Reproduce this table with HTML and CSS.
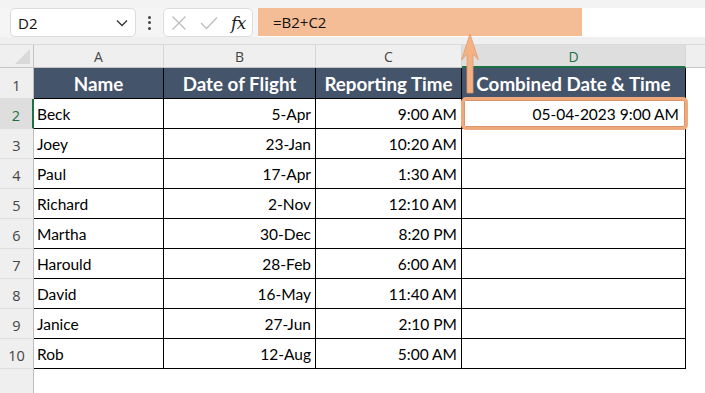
FILE: index.html
```html
<!DOCTYPE html>
<html>
<head>
<meta charset="utf-8">
<link rel="stylesheet" href="styles.css">
</head>
<body>
<div class="app">
  <div class="topband"></div>
  <div class="formula-row">
    <div class="namebox">
      <span class="ref">D2</span>
      <svg class="chev" width="12" height="8" viewBox="0 0 12 8"><path d="M1 1.5 L6 6.5 L11 1.5" fill="none" stroke="#333" stroke-width="1.3"/></svg>
    </div>
    <div class="dots"><span></span><span></span><span></span></div>
    <div class="fxbox">
      <svg width="16" height="16" viewBox="0 0 16 16"><path d="M1.5 1.5 L14.5 14.5 M14.5 1.5 L1.5 14.5" stroke="#bdbdbd" stroke-width="1.3"/></svg>
      <svg width="18" height="14" viewBox="0 0 18 14"><path d="M1 7 L6.5 12.5 L17 1.5" fill="none" stroke="#bdbdbd" stroke-width="1.3"/></svg>
      <span class="fx">fx</span>
    </div>
    <div class="input"><div class="hl">=B2+C2</div></div>
  </div>
  <div class="gapband"></div>
  <div class="sheet">
    <div class="ch corner"><span class="tri"></span></div>
    <div class="ch">A</div>
    <div class="ch">B</div>
    <div class="ch">C</div>
    <div class="ch sel">D</div>
    <div class="ch last"></div>

    <div class="rh r1">1</div>
    <div class="hd">Name</div>
    <div class="hd">Date of Flight</div>
    <div class="hd">Reporting Time</div>
    <div class="hd">Combined Date &amp; Time</div>
    <div class="ex r1"></div>

    <div class="rh sel">2</div>
    <div class="c l">Beck</div>
    <div class="c">5-Apr</div>
    <div class="c">9:00 AM</div>
    <div class="c active">05-04-2023 9:00 AM<span class="ring"></span></div>
    <div class="ex"></div>

    <div class="rh">3</div>
    <div class="c l">Joey</div>
    <div class="c">23-Jan</div>
    <div class="c">10:20 AM</div>
    <div class="c"></div>
    <div class="ex"></div>

    <div class="rh">4</div>
    <div class="c l">Paul</div>
    <div class="c">17-Apr</div>
    <div class="c">1:30 AM</div>
    <div class="c"></div>
    <div class="ex"></div>

    <div class="rh">5</div>
    <div class="c l">Richard</div>
    <div class="c">2-Nov</div>
    <div class="c">12:10 AM</div>
    <div class="c"></div>
    <div class="ex"></div>

    <div class="rh">6</div>
    <div class="c l">Martha</div>
    <div class="c">30-Dec</div>
    <div class="c">8:20 PM</div>
    <div class="c"></div>
    <div class="ex"></div>

    <div class="rh">7</div>
    <div class="c l">Harould</div>
    <div class="c">28-Feb</div>
    <div class="c">6:00 AM</div>
    <div class="c"></div>
    <div class="ex"></div>

    <div class="rh">8</div>
    <div class="c l">David</div>
    <div class="c">16-May</div>
    <div class="c">11:40 AM</div>
    <div class="c"></div>
    <div class="ex"></div>

    <div class="rh">9</div>
    <div class="c l">Janice</div>
    <div class="c">27-Jun</div>
    <div class="c">2:10 PM</div>
    <div class="c"></div>
    <div class="ex"></div>

    <div class="rh">10</div>
    <div class="c l">Rob</div>
    <div class="c">12-Aug</div>
    <div class="c">5:00 AM</div>
    <div class="c"></div>
    <div class="ex"></div>

    <div class="rh empty"></div>
    <div class="blank"></div>
  </div>
  <svg class="arrow" width="28" height="66" viewBox="0 0 28 66"><path d="M14 3 L22.5 29 L17 23 L17 62 L11 62 L11 23 L5.5 29 Z" fill="#f4b183" stroke="#e29a69" stroke-width="0.8" stroke-linejoin="round"/></svg>
</div>
</body>
</html>
```

FILE: styles.css
```css
* { box-sizing: border-box; }
html, body { margin: 0; padding: 0; background: #fff; }
.app { position: relative; width: 705px; height: 393px; overflow: hidden; font-family: "Open Sans", "Noto Sans", sans-serif; }

.topband { height: 8px; background: #f3f3f3; }
.formula-row { height: 29px; background: #f5f5f5; display: flex; align-items: stretch; padding-left: 10px; }
.namebox { width: 126px; background: #fff; border: 1px solid #dcdcdc; border-radius: 5px; display: flex; align-items: center; justify-content: space-between; padding: 0 7px 0 7px; }
.ref { font-size: 15px; color: #111; }
.dots { width: 27px; display: flex; flex-direction: column; align-items: center; justify-content: center; gap: 2.5px; }
.dots span { width: 3px; height: 3px; background: #444; border-radius: 50%; }
.fxbox { width: 90px; background: #fff; border: 1px solid #dcdcdc; border-radius: 5px; display: flex; align-items: center; padding-left: 7px; gap: 0; }
.fxbox svg:first-child { margin-right: 13px; }
.fxbox svg:nth-child(2) { margin-right: 13px; }
.fx { font-family: "DejaVu Serif", "Liberation Serif", serif; font-style: italic; font-size: 17px; color: #222; letter-spacing: -0.5px; }
.input { flex: 1; margin-left: 5px; background: #fff; display: flex; }
.hl { width: 324px; height: 28px; background: #f4bd96; font-size: 15px; color: #111; padding-left: 15px; display: flex; align-items: center; }

.gapband { height: 8px; background: #efefef; border-bottom: 1px solid #dadada; }

.sheet { display: grid; grid-template-columns: 34px 130px 152px 146px 224px 1fr; grid-template-rows: 23px 31px repeat(9, 30px) 1fr; height: 348px; font-family: Lato, "Liberation Sans", sans-serif; font-size: 15.5px; }

.ch { background: #efefef; border-right: 1px solid #d6d6d6; border-bottom: 1px solid #c4c4c4; display: flex; align-items: center; justify-content: center; font-family: "Open Sans", "Noto Sans", sans-serif; font-size: 14px; color: #444; padding-top: 1px; }
.ch.corner { position: relative; border-right: 1px solid #c4c4c4; }
.ch.corner .tri { position: absolute; right: 3px; bottom: 3px; width: 0; height: 0; border-left: 15px solid transparent; border-bottom: 15px solid #d9d9d9; }
.ch.sel { background: #dedede; color: #1e7145; border-bottom: 2px solid #1e7145; padding-top: 2px; }
.ch.last { border-right: none; }

.rh { background: #efefef; border-right: 1px solid #bdbdbd; border-bottom: 1px solid #dedede; display: flex; align-items: flex-end; justify-content: center; padding-bottom: 3px; font-family: "Open Sans", "Noto Sans", sans-serif; font-size: 14.5px; color: #444; }
.rh.sel { background: #dedede; color: #1e7145; border-right: 2px solid #1e7145; }
.rh.empty { border-bottom: none; }

.hd { background: #44546a; color: #fff; font-weight: 700; font-size: 18.8px; white-space: nowrap; border-right: 1px solid #000; border-bottom: 1px solid #000; display: flex; align-items: flex-end; justify-content: center; padding-bottom: 3px; }

.c { border-right: 1px solid #000; border-bottom: 1px solid #000; display: flex; align-items: flex-end; justify-content: flex-end; padding: 0 4px 5px 3px; color: #000; }
.c.l { justify-content: flex-start; }
.c.active { position: relative; padding-right: 6px; }
.c.active .ring { position: absolute; left: -1px; top: -2px; right: -3px; bottom: -2px; border: 3px solid #f0a97a; border-radius: 5px; box-shadow: inset 0 0 0 1px #d9956a; }

.ex { background: #fff; }
.blank { grid-column: 2 / 7; background: #fff; }

.arrow { position: absolute; left: 456px; top: 31px; }
```
